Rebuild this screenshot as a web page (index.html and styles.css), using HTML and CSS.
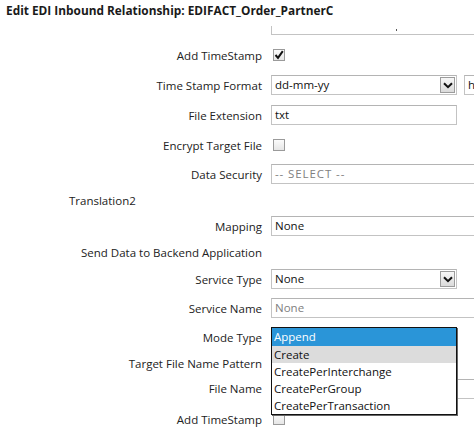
FILE: index.html
```html
<!DOCTYPE html>
<html>
<head>
<meta charset="utf-8">
<link rel="stylesheet" href="styles.css">
</head>
<body>
<div class="page">
  <div class="header">Edit EDI Inbound Relationship: EDIFACT_Order_PartnerC</div>
  <div class="row-partial">
    <div class="label"></div>
    <div class="partial-field"><span class="dot"></span></div>
  </div>
  <div class="form">
    <div class="row">
      <div class="label">Add TimeStamp</div>
      <div class="checkbox checked"><svg width="10" height="10" viewBox="0 0 10 10"><path d="M1.5 5 L4 7.8 L8.8 1.2" fill="none" stroke="#111" stroke-width="2"/></svg></div>
    </div>
    <div class="row">
      <div class="label">Time Stamp Format</div>
      <div class="select"><span class="value">dd-mm-yy</span><span class="arrow"><svg width="10" height="7" viewBox="0 0 10 7"><path d="M1 1.2 L5 5.2 L9 1.2" fill="none" stroke="#111" stroke-width="2"/></svg></span></div>
      <div class="select select-second"><span class="value">h</span></div>
    </div>
    <div class="row">
      <div class="label">File Extension</div>
      <div class="input input-short">txt</div>
    </div>
    <div class="row">
      <div class="label">Encrypt Target File</div>
      <div class="checkbox"></div>
    </div>
    <div class="row row-28">
      <div class="label">Data Security</div>
      <div class="input input-wide placeholder spaced">-- SELECT --</div>
    </div>
    <div class="row row-25">
      <div class="section section-translation">Translation2</div>
    </div>
    <div class="row row-26">
      <div class="label">Mapping</div>
      <div class="input input-wide">None</div>
    </div>
    <div class="row row-26">
      <div class="label">Send Data to Backend Application</div>
    </div>
    <div class="row row-28">
      <div class="label">Service Type</div>
      <div class="select"><span class="value">None</span><span class="arrow"><svg width="10" height="7" viewBox="0 0 10 7"><path d="M1 1.2 L5 5.2 L9 1.2" fill="none" stroke="#111" stroke-width="2"/></svg></span></div>
    </div>
    <div class="row">
      <div class="label">Service Name</div>
      <div class="input input-wide placeholder">None</div>
    </div>
    <div class="row row-28">
      <div class="label">Mode Type</div>
      <div class="dropdown-anchor">
        <ul class="listbox">
          <li class="option selected">Append</li>
          <li class="option hover">Create</li>
          <li class="option">CreatePerInterchange</li>
          <li class="option">CreatePerGroup</li>
          <li class="option">CreatePerTransaction</li>
        </ul>
      </div>
    </div>
    <div class="row row-24">
      <div class="label">Target File Name Pattern</div>
    </div>
    <div class="row row-27">
      <div class="label">File Name</div>
      <div class="input input-wide"></div>
    </div>
    <div class="row row-34">
      <div class="label">Add TimeStamp</div>
      <div class="checkbox"></div>
    </div>
  </div>
</div>
</body>
</html>
```
FILE: styles.css
```css
html, body {
  margin: 0;
  padding: 0;
  background: #fff;
  overflow: hidden;
}
body {
  width: 474px;
  height: 430px;
  font-family: "Open Sans", "Liberation Sans", Arial, sans-serif;
  font-size: 11.5px;
  color: #222;
}
.page {
  width: 700px;
}
.header {
  height: 26px;
  box-sizing: border-box;
  padding: 3px 0 0 6px;
  font-weight: bold;
  font-size: 11.85px;
  line-height: 14px;
  color: #1a1a1a;
}
.row-partial {
  display: flex;
  gap: 9px;
  height: 9px;
}
.partial-field {
  width: 300px;
  height: 8px;
  border-left: 1px solid #c3c3c3;
  border-bottom: 1px solid #c3c3c3;
  display: flex;
  padding-left: 124px;
}
.dot {
  width: 1px;
  height: 2px;
  margin-top: 3px;
  background: #555;
}
.form {
  padding-top: 5px;
  display: flex;
  flex-direction: column;
}
.row {
  display: flex;
  align-items: center;
  gap: 9px;
  height: 30px;
}
.row-28 { height: 28px; }
.row-27 { height: 27px; }
.row-26 { height: 26px; }
.row-25 { height: 25px; }
.row-24 { height: 24px; }
.row-34 { height: 34px; }
.label {
  width: 262px;
  flex: none;
  text-align: right;
  white-space: nowrap;
}
.section-translation {
  padding-left: 69px;
}
.checkbox {
  width: 12px;
  height: 12px;
  box-sizing: border-box;
  border: 1px solid #9a9a9a;
  background: linear-gradient(#fbfbfb, #e6e6e6);
  margin-left: 2px;
  display: flex;
  align-items: center;
  justify-content: center;
}
.input, .select {
  height: 20px;
  box-sizing: border-box;
  border: 1px solid #c3c3c3;
  border-top-color: #b4b4b4;
  background: #fff;
  padding-left: 3px;
  line-height: 18px;
  color: #111;
  flex: none;
}
.input-short { width: 186px; }
.input-wide { width: 320px; }
.placeholder { color: #808080; }
.spaced { letter-spacing: 0.9px; }
.select {
  width: 186px;
  display: flex;
  align-items: center;
  justify-content: space-between;
  padding-right: 1px;
}
.select-second {
  width: 120px;
  margin-left: -2px;
}
.arrow {
  width: 15px;
  height: 16px;
  box-sizing: border-box;
  border: 1px solid #9c9c9c;
  background: linear-gradient(#f7f7f7, #dadada);
  display: flex;
  align-items: center;
  justify-content: center;
}
.dropdown-anchor {
  position: relative;
  width: 186px;
  height: 20px;
  align-self: flex-start;
  margin-top: 4px;
}
.listbox {
  position: absolute;
  top: 0;
  left: 0;
  z-index: 5;
  margin: 0;
  padding: 0;
  list-style: none;
  width: 186px;
  box-sizing: border-box;
  border: 1px solid #111;
  box-shadow: 1px 1px 0 #666;
  background: #fff;
}
.option {
  height: 17px;
  line-height: 17px;
  padding-left: 2px;
  color: #111;
  white-space: nowrap;
}
.option.selected {
  background: #2a95d8;
  color: #fff;
  height: 18px;
  line-height: 18px;
}
.option.hover {
  background: #dcdcdc;
}
```
